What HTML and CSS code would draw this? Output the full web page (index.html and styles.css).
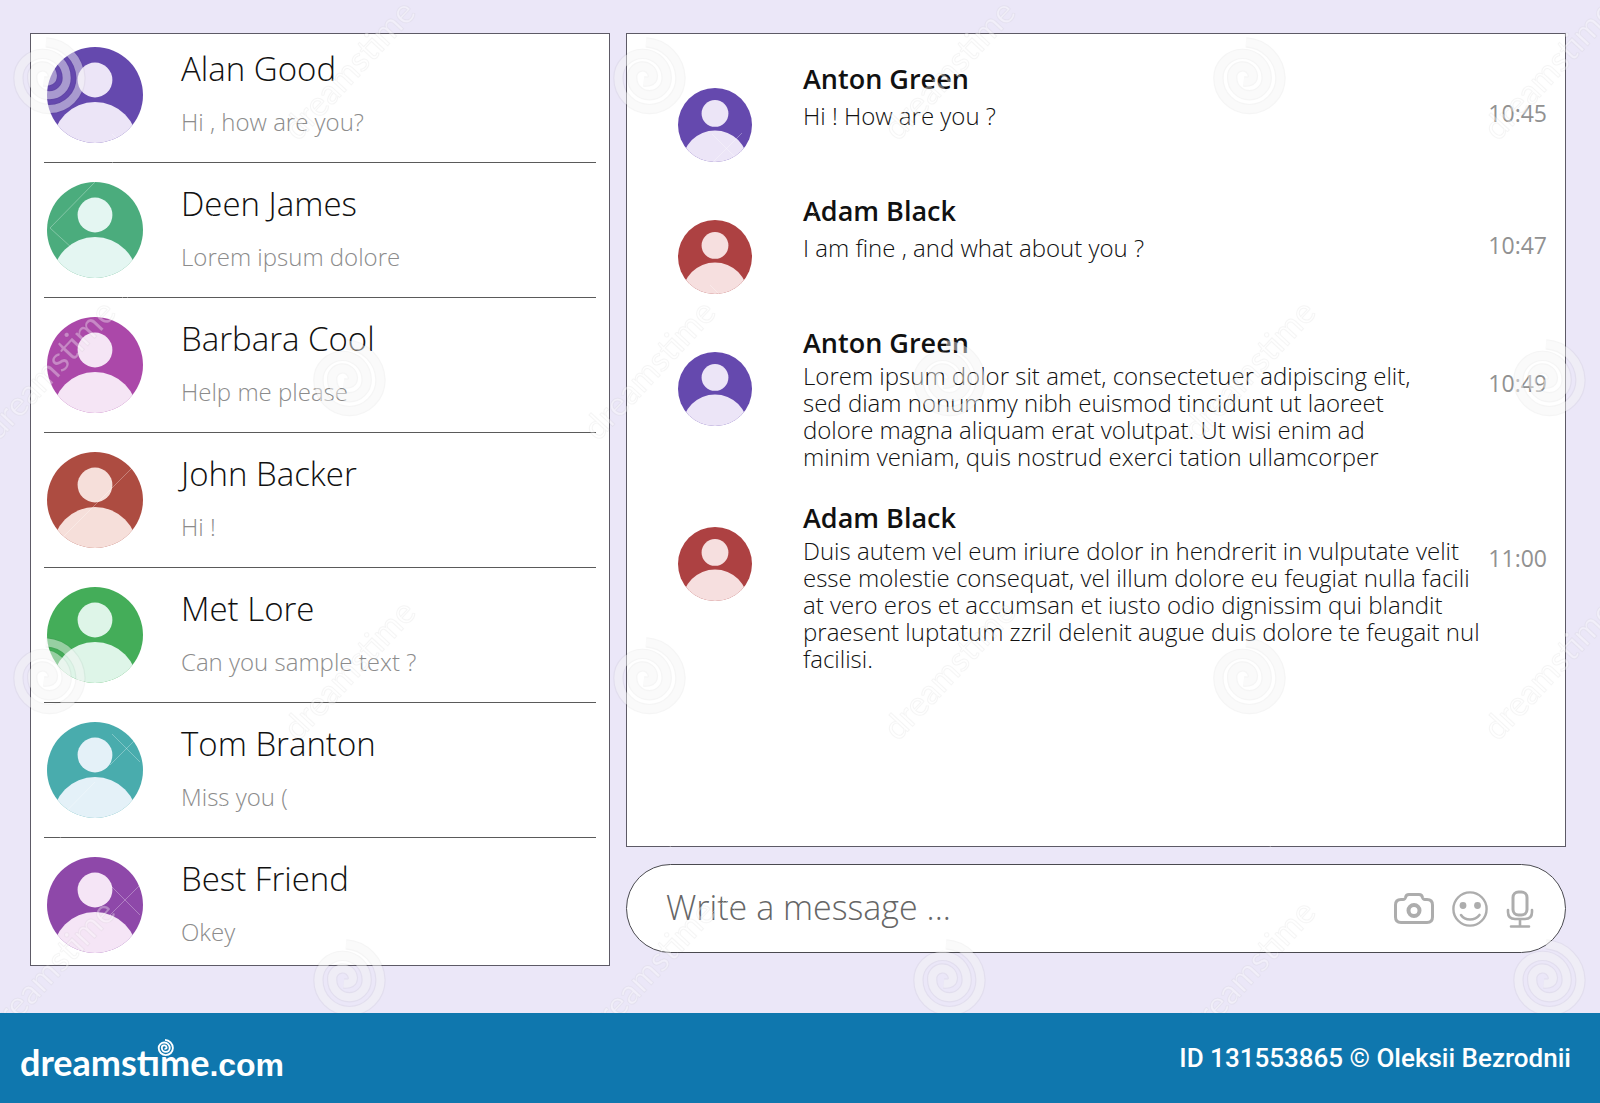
FILE: index.html
```html
<!DOCTYPE html>
<html lang="en">
<head>
    <meta charset="UTF-8">
    <meta name="viewport" content="width=device-width, initial-scale=1.0">
    <title>Messenger</title>
    <link rel="stylesheet" href="styles.css">
</head>
<body>
    <!-- shared shapes -->
    <svg class="defs" width="0" height="0" aria-hidden="true">
        <clipPath id="round"><circle cx="48" cy="48" r="48"/></clipPath>
        <symbol id="person" viewBox="0 0 96 96">
            <circle class="back" cx="48" cy="48" r="48"/>
            <circle class="front" cx="48" cy="33" r="17.4"/>
            <circle class="front" cx="48" cy="97.5" r="42.5" clip-path="url(#round)"/>
        </symbol>
        <path id="swirl" d="M2 -3Q-6 -4 -6 2A9 9 0 0 0 12 0A15 15 0 0 0 -18 0A21 21 0 0 0 24 0A27 27 0 0 0 -30 0A32 32 0 0 0 0 31" transform="rotate(180)"/>
    </svg>

    <main class="app">
        <nav class="contacts" aria-label="Contacts">
            <ul>
                <li><a class="contact" href="#">
                    <svg class="avatar violet"><use href="#person"/></svg>
                    <span><strong>Alan Good</strong><small>Hi , how are you?</small></span>
                </a></li>
                <li><a class="contact" href="#">
                    <svg class="avatar mint"><use href="#person"/></svg>
                    <span><strong>Deen James</strong><small>Lorem ipsum dolore</small></span>
                </a></li>
                <li><a class="contact" href="#">
                    <svg class="avatar pink"><use href="#person"/></svg>
                    <span><strong>Barbara Cool</strong><small>Help me please</small></span>
                </a></li>
                <li><a class="contact" href="#">
                    <svg class="avatar brick"><use href="#person"/></svg>
                    <span><strong>John Backer</strong><small>Hi !</small></span>
                </a></li>
                <li><a class="contact" href="#">
                    <svg class="avatar green"><use href="#person"/></svg>
                    <span><strong>Met Lore</strong><small>Can you sample text ?</small></span>
                </a></li>
                <li><a class="contact" href="#">
                    <svg class="avatar teal"><use href="#person"/></svg>
                    <span><strong>Tom Branton</strong><small>Miss you (</small></span>
                </a></li>
                <li><a class="contact" href="#">
                    <svg class="avatar purple"><use href="#person"/></svg>
                    <span><strong>Best Friend</strong><small>Okey</small></span>
                </a></li>
            </ul>
        </nav>

        <div class="chat">
            <section class="messages" aria-label="Conversation">
                <article class="message short">
                    <svg class="avatar violet"><use href="#person"/></svg>
                    <div class="body">
                        <h2>Anton Green</h2>
                        <p>Hi ! How are you ?</p>
                    </div>
                    <time>10:45</time>
                </article>
                <article class="message short">
                    <svg class="avatar red"><use href="#person"/></svg>
                    <div class="body">
                        <h2>Adam Black</h2>
                        <p>I am fine , and what about you ?</p>
                    </div>
                    <time>10:47</time>
                </article>
                <article class="message">
                    <svg class="avatar violet"><use href="#person"/></svg>
                    <div class="body">
                        <h2>Anton Green</h2>
                        <p>Lorem ipsum dolor sit amet, consectetuer adipiscing elit,<br>
                        sed diam nonummy nibh euismod tincidunt ut laoreet<br>
                        dolore magna aliquam erat volutpat. Ut wisi enim ad<br>
                        minim veniam, quis nostrud exerci tation ullamcorper</p>
                    </div>
                    <time>10:49</time>
                </article>
                <article class="message">
                    <svg class="avatar red"><use href="#person"/></svg>
                    <div class="body">
                        <h2>Adam Black</h2>
                        <p>Duis autem vel eum iriure dolor in hendrerit in vulputate velit<br>
                        esse molestie consequat, vel illum dolore eu feugiat nulla facili<br>
                        at vero eros et accumsan et iusto odio dignissim qui blandit<br>
                        praesent luptatum zzril delenit augue duis dolore te feugait nul<br>
                        facilisi.</p>
                    </div>
                    <time>11:00</time>
                </article>
            </section>

            <form class="composer">
                <input type="text" placeholder="Write a message ..." aria-label="Write a message">
                <button type="button" aria-label="Send a photo">
                    <svg width="40" height="38" viewBox="0 0 40 38">
                        <path stroke-width="3" d="M7 9.5H9Q11 9.5 11.5 7.5Q12 4.5 15 4.5H25Q28 4.5 28.5 7.5Q29 9.5 31 9.5H33Q38.5 9.5 38.5 15V27Q38.5 32.5 33 32.5H7Q1.5 32.5 1.5 27V15Q1.5 9.5 7 9.5Z"/>
                        <circle stroke-width="4" cx="20" cy="20.5" r="5.5"/>
                    </svg>
                </button>
                <button type="button" aria-label="Add a smile">
                    <svg width="36" height="38" viewBox="0 0 36 38">
                        <circle stroke-width="2.4" cx="18" cy="19" r="16.6"/>
                        <circle class="dot" cx="11" cy="15.5" r="3.4"/>
                        <circle class="dot" cx="25.5" cy="15.5" r="3.4"/>
                        <path stroke-width="2.6" d="M9 25Q12 29.5 18 29.5T27.5 25"/>
                    </svg>
                </button>
                <button type="button" aria-label="Record voice">
                    <svg width="28" height="38" viewBox="0 0 28 38">
                        <rect stroke-width="3" x="7" y="2" width="14" height="23" rx="5.5"/>
                        <path stroke-width="2.6" d="M2 20V22Q2 29 9 29H19Q26 29 26 22V20M14 29V36M5 36.5H23"/>
                    </svg>
                </button>
            </form>
        </div>

        <!-- watermark tile, repeats every 600px -->
        <svg class="watermark" aria-hidden="true">
            <pattern id="tile" width="600" height="600" patternUnits="userSpaceOnUse">
                <g class="edge">
                    <use href="#swirl" transform="translate(46 78) scale(1.15)"/>
                    <use href="#swirl" transform="translate(346 380) scale(1.15)"/>
                </g>
                <g class="fill">
                    <use href="#swirl" transform="translate(46 78) scale(1.15)"/>
                    <use href="#swirl" transform="translate(346 380) scale(1.15)"/>
                </g>
                <path class="ray" d="M95 182L50 228L72 248M150 450L50 550M112 134L140 162M110 165L142 133M110 285L140 315M110 315L140 285M200 228L260 168M440 468L500 528"/>
                <text transform="translate(298 142) rotate(-47)">dreamstime</text>
                <text transform="translate(-2 442) rotate(-47)">dreamstime</text>
                <text transform="translate(598 442) rotate(-47)">dreamstime</text>
            </pattern>
            <rect width="100%" height="100%" fill="url(#tile)"/>
        </svg>
    </main>

    <footer class="footer">
        <a class="logo" href="#">
            <span class="word">dreamst<span class="i">ı<svg viewBox="-38 -38 76 76"><use href="#swirl"/></svg></span>me</span><b>.com</b>
        </a>
        <p>ID 131553865 © Oleksii Bezrodnii</p>
    </footer>
</body>
</html>
```
FILE: styles.css
```css
* {
    box-sizing: border-box;
}
body {
    margin: 0;
    min-height: 100vh;
    display: flex;
    flex-direction: column;
    font-family: "Open Sans", "Noto Sans", sans-serif;
    font-weight: 300;
    color: #111;
    background-color: #ebe7f8;
}
h2, p, ul {
    margin: 0;
    padding: 0;
}
.defs {
    position: absolute;
}
.app {
    position: relative;
    flex: 1;
    display: grid;
    grid-template-columns: 29fr 47fr;
    gap: 16px;
    padding: 33px 34px 47px 30px;
}

/* avatars */
.avatar {
    flex: none;
    width: 96px;
    height: 96px;
}
.back {
    fill: var(--back);
}
.front {
    fill: var(--front);
}
.violet { --back: #6549ae; --front: #ece5f7; }
.mint { --back: #4bac7d; --front: #e4f6f2; }
.pink { --back: #ab48a9; --front: #f5e5f5; }
.brick { --back: #ad4c41; --front: #f6dfda; }
.green { --back: #44ad59; --front: #def5e8; }
.teal { --back: #49acad; --front: #e4f1f8; }
.purple { --back: #8e48a9; --front: #f5e5f6; }
.red { --back: #ad4142; --front: #f6dfdf; }

/* contacts */
.contacts {
    background-color: #fff;
    border: 1px solid #5d5a66;
}
.contacts ul {
    list-style: none;
    padding: 13px 13px 0;
}
.contacts li {
    padding-bottom: 19px;
}
.contacts li + li {
    padding-top: 19px;
    border-top: 1px solid #5a5a5a;
}
.contacts li:last-child {
    padding-bottom: 0;
}
.contact {
    display: flex;
    gap: 38px;
    padding-left: 3px;
    color: inherit;
    text-decoration: none;
}
.contact strong, .contact small {
    display: block;
    font-weight: 300;
    white-space: nowrap;
}
.contact strong {
    font-size: 33px;
    line-height: 44px;
}
.contact small {
    margin-top: 15px;
    font-size: 24px;
    line-height: 32px;
    color: #8c8c8c;
}

/* chat */
.chat {
    display: flex;
    flex-direction: column;
    gap: 17px;
    min-width: 0;
    padding-bottom: 13px;
}
.messages {
    flex: 1;
    padding: 27px 18px 0 51px;
    background-color: #fff;
    border: 1px solid #5d5a66;
}
.message {
    display: flex;
    align-items: flex-start;
    min-height: 132px;
    padding-bottom: 30px;
}
.message .avatar {
    width: 74px;
    height: 74px;
    margin: 27px 51px 0 0;
}
.body {
    flex: 1;
    min-width: 0;
}
.body h2 {
    margin-bottom: 1px;
    font-size: 27px;
    font-weight: 600;
    line-height: 36px;
}
.body p {
    font-size: 24px;
    line-height: 27px;
    white-space: nowrap;
}
.message time {
    margin-top: 42px;
    font-size: 23px;
    font-weight: 400;
    line-height: 32px;
    color: #919191;
}
.short p {
    padding-top: 4px;
}
.short time {
    margin-top: 36px;
}

/* message box */
.composer {
    display: flex;
    align-items: center;
    gap: 18px;
    height: 89px;
    padding: 0 31px 0 39px;
    background-color: #fff;
    border: 1px solid #4a4a50;
    border-radius: 45px;
}
.composer input {
    flex: 1;
    min-width: 0;
    padding: 0 0 4px;
    border: 0;
    outline: 0;
    font: inherit;
    font-size: 34px;
    background: none;
}
.composer input::placeholder {
    color: #666;
    opacity: 1;
}
.composer button {
    display: flex;
    padding: 0;
    border: 0;
    background: none;
    cursor: pointer;
}
.composer svg {
    fill: none;
    stroke: #adadad;
    stroke-linecap: round;
    stroke-linejoin: round;
}
.composer .dot {
    fill: #adadad;
    stroke: none;
}

/* watermark */
.watermark {
    position: absolute;
    inset: 0;
    width: 100%;
    height: 100%;
    pointer-events: none;
}
.watermark .edge {
    fill: none;
    stroke: #000;
    stroke-width: 9;
    opacity: 0.04;
}
.watermark .fill {
    fill: none;
    stroke: #fff;
    stroke-width: 7;
    opacity: 0.45;
}
.watermark .ray {
    fill: none;
    stroke: #fff;
    stroke-width: 1;
    opacity: 0.3;
}
.watermark text {
    font-family: Lato, sans-serif;
    font-size: 34px;
    font-weight: 400;
    fill: rgba(255, 255, 255, 0.35);
    stroke: rgba(0, 0, 0, 0.04);
}

/* footer */
.footer {
    display: flex;
    justify-content: space-between;
    align-items: center;
    height: 90px;
    padding: 0 29px 0 20px;
    color: #fff;
    background-color: #0f77ae;
}
.footer p {
    font-family: Roboto, sans-serif;
    font-size: 26px;
    font-weight: 500;
}
.logo {
    padding-top: 8px;
    font-family: Lato, sans-serif;
    font-size: 36px;
    color: inherit;
    text-decoration: none;
}
.word {
    font-weight: 700;
}
.logo b {
    font-family: "Liberation Sans", sans-serif;
    font-size: 32px;
    font-weight: 700;
}
.i {
    position: relative;
}
.i svg {
    position: absolute;
    left: -5px;
    top: -2px;
    width: 20px;
    height: 20px;
    fill: none;
    stroke: #fff;
    stroke-width: 7;
}
```
